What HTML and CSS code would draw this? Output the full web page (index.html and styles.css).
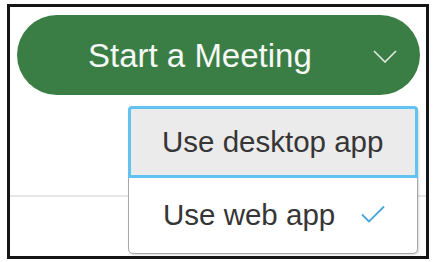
FILE: index.html
```html
<!DOCTYPE html>
<html>
<head>
<meta charset="utf-8">
<link rel="stylesheet" href="styles.css">
</head>
<body>
<div class="frame">
  <div class="btn">
    <span class="btn-label">Start a Meeting</span>
    <svg class="chev" width="24" height="13" viewBox="0 0 24 13"><path d="M1 1 L12 12 L23 1" fill="none" stroke="#dfe9e0" stroke-width="1.6"/></svg>
  </div>
  <div class="sep"></div>
  <div class="menu">
    <div class="item active">Use desktop app</div>
    <div class="item">Use web app
      <svg class="check" width="24" height="18" viewBox="0 0 24 18"><path d="M1 9.5 L8 16.5 L23 1.5" fill="none" stroke="#4aa6d9" stroke-width="1.8"/></svg>
    </div>
  </div>
</div>
</body>
</html>
```
FILE: styles.css
```css
html, body { margin: 0; padding: 0; background: #fff; }
body { width: 440px; height: 262px; overflow: hidden; font-family: "Liberation Sans", Arial, sans-serif; }
.frame {
  position: relative;
  margin: 4px 0 0 7px;
  width: 416px;
  height: 249px;
  border: 3px solid #151515;
  background: #fff;
  display: flex;
  flex-direction: column;
}
.btn {
  margin: 8px 6px 0 7px;
  height: 80px;
  border-radius: 40px;
  background: #3b7e45;
  display: flex;
  align-items: center;
  padding: 0 23px 0 71px;
  justify-content: space-between;
}
.btn-label { color: #f6f8f6; font-size: 33px; line-height: 1; white-space: nowrap; }
.chev { display: block; margin-top: 2px; }
.sep { margin-top: 100px; height: 2px; background: #e6e6e6; }
.menu {
  position: absolute;
  left: 118px;
  top: 99px;
  width: 288px;
  height: 146px;
  border: 1px solid #a9a9a9;
  border-radius: 5px;
  background: #fff;
  box-shadow: 1px 1px 2px rgba(0,0,0,0.15);
  display: flex;
  flex-direction: column;
}
.item {
  display: flex;
  align-items: center;
  justify-content: space-between;
  padding: 0 32px 0 34px;
  font-size: 29.5px;
  color: #363636;
  white-space: nowrap;
  flex: 1;
}
.item.active {
  flex: 0 0 72px;
  box-sizing: border-box;
  background: #ebebeb;
  border: 3px solid #62c2f0;
  border-radius: 4px 4px 0 0;
  padding-left: 31px;
  padding-right: 0;
  margin: -1px -1px 0 -1px;
}
.item:last-child { padding-bottom: 2px; }
.check { display: block; margin-top: -2px; }
```
